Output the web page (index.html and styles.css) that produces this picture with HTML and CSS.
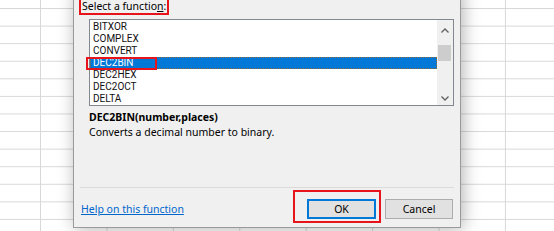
FILE: index.html
```html
<!DOCTYPE html>
<html>
<head>
<meta charset="utf-8">
<link rel="stylesheet" href="styles.css">
</head>
<body>
<div class="sheet">
  <div class="dialog">
    <div class="top">
      <span class="label mark">Select a functio<u>n</u>:</span>
      <div class="listbox">
        <ul class="items">
          <li>BITXOR</li>
          <li>COMPLEX</li>
          <li>CONVERT</li>
          <li class="sel">DEC2BIN<span class="mark-box"></span></li>
          <li>DEC2HEX</li>
          <li>DEC2OCT</li>
          <li>DELTA</li>
        </ul>
        <div class="scrollbar">
          <div class="sb-btn"><svg width="8" height="5" viewBox="0 0 8 5"><polyline points="0.5,4.5 4,1 7.5,4.5" fill="none" stroke="#606060" stroke-width="1.3"/></svg></div>
          <div class="track"><div class="thumb"></div></div>
          <div class="sb-btn down"><svg width="8" height="5" viewBox="0 0 8 5"><polyline points="0.5,0.5 4,4 7.5,0.5" fill="none" stroke="#606060" stroke-width="1.3"/></svg></div>
        </div>
      </div>
      <div class="desc">
        <div class="sig">DEC2BIN(number,places)</div>
        <div class="text">Converts a decimal number to binary.</div>
      </div>
    </div>
    <div class="footer">
      <div class="sep"></div>
      <div class="actions">
        <a class="help" href="#">Help on this function</a>
        <div class="buttons">
          <button class="btn ok">OK<span class="ok-mark"></span></button>
          <button class="btn cancel">Cancel</button>
        </div>
      </div>
    </div>
  </div>
</div>
</body>
</html>
```
FILE: styles.css
```css
html, body {
  margin: 0;
  padding: 0;
}
body {
  width: 554px;
  height: 231px;
  overflow: hidden;
  font-family: "Noto Sans", "DejaVu Sans", sans-serif;
  font-size: 10.5px;
  color: #000;
}
.sheet {
  position: relative;
  width: 554px;
  height: 231px;
  background-color: #fff;
  background-image:
    linear-gradient(to right, #d8d8d8 1px, transparent 1px),
    linear-gradient(to bottom, #d8d8d8 1px, transparent 1px);
  background-size: 66.43px 100%, 100% 17.58px;
  background-position: 40px 0, 0 8px;
}
.dialog {
  position: absolute;
  left: 73px;
  top: -10px;
  width: 388px;
  height: 238px;
  box-sizing: border-box;
  border: 1px solid #9a9a9a;
  background: #f0f0f0;
  box-shadow: 2px 1px 16px rgba(0, 0, 0, 0.3);
  padding: 7px 6px 8px 5px;
  display: flex;
  flex-direction: column;
  justify-content: space-between;
}
.top {
  display: flex;
  flex-direction: column;
  align-items: flex-start;
}
.label {
  display: inline-block;
  border: 2px solid #e8141b;
  padding: 0 1px;
  line-height: 13px;
  height: 13px;
}
.label u {
  text-decoration: underline;
}
.listbox {
  margin-top: 4px;
  margin-left: 10px;
  width: 365px;
  height: 87px;
  box-sizing: border-box;
  border: 1px solid #828790;
  background: #fff;
  display: flex;
}
.items {
  list-style: none;
  margin: 0;
  padding: 1px 0 0 0;
  flex: 1;
  font-family: Roboto, "Liberation Sans", sans-serif;
  font-size: 10px;
  color: #111;
}
.items li {
  position: relative;
  height: 12px;
  line-height: 12px;
  padding-left: 3px;
  white-space: nowrap;
}
.items li.sel {
  background: #0078d7;
  color: #fff;
  outline: 1px dotted #8a6a3a;
  outline-offset: -1px;
}
.mark-box {
  position: absolute;
  left: -4px;
  top: 0;
  width: 71px;
  height: 13px;
  box-sizing: border-box;
  border: 2px solid #e8141b;
}
.scrollbar {
  width: 16px;
  background: #f0f0f0;
  display: flex;
  flex-direction: column;
}
.sb-btn {
  height: 17px;
  display: flex;
  align-items: center;
  justify-content: center;
  padding-top: 3px;
  box-sizing: border-box;
}
.sb-btn.down {
  padding-top: 0;
  align-items: flex-end;
  padding-bottom: 4px;
}
.track {
  flex: 1;
}
.thumb {
  margin: 8px 2px 0 1px;
  height: 16px;
  background: #cdcdcd;
}
.desc {
  margin-top: 4px;
  margin-left: 10px;
  line-height: 15px;
}
.sig {
  font-weight: bold;
}
.footer {
  display: flex;
  flex-direction: column;
}
.sep {
  height: 1px;
  margin-left: 1px;
  background: #dadada;
}
.actions {
  margin-top: 11px;
  height: 20px;
  display: flex;
  align-items: center;
  justify-content: space-between;
}
.help {
  margin-left: 2px;
  color: #0066cc;
  text-decoration: underline;
}
.buttons {
  display: flex;
  gap: 9px;
  margin-right: 1px;
}
.btn {
  position: relative;
  height: 20px;
  box-sizing: border-box;
  background: #e1e1e1;
  border: 1px solid #adadad;
  font-family: "Noto Sans", "DejaVu Sans", sans-serif;
  font-size: 10.5px;
  color: #000;
  padding: 0;
  margin: 0;
}
.btn.ok {
  width: 69px;
  border: 2px solid #0078d7;
}
.btn.cancel {
  width: 68px;
}
.ok-mark {
  position: absolute;
  left: -16px;
  top: -11px;
  right: -7px;
  bottom: -6px;
  border: 2px solid #e8141b;
}
```
